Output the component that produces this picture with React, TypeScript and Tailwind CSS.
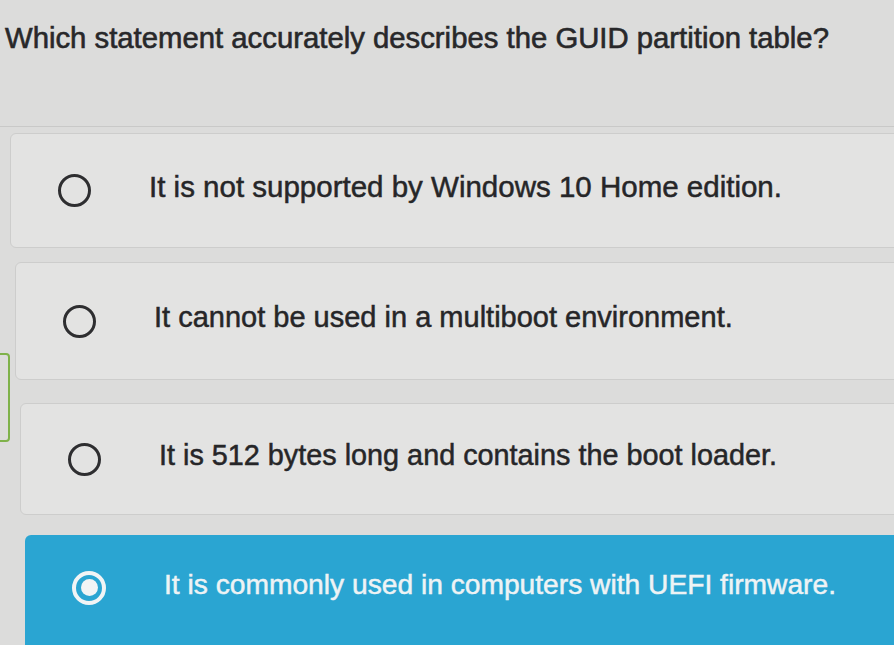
import React from 'react';

interface Choice {
    id: number;
    text: string;
    selected?: boolean;
    offset: string;
    height: string;
    size: string;
}

const choices: Choice[] = [
    { id: 1, text: 'It is not supported by Windows 10 Home edition.', offset: 'ml-[10px]', height: 'h-[115px]', size: 'text-[29.5px]' },
    { id: 2, text: 'It cannot be used in a multiboot environment.', offset: 'ml-[15px]', height: 'h-[118px]', size: 'text-[29px]' },
    { id: 3, text: 'It is 512 bytes long and contains the boot loader.', offset: 'ml-[20px]', height: 'h-[112px]', size: 'text-[28.8px]' },
    { id: 4, text: 'It is commonly used in computers with UEFI firmware.', selected: true, offset: 'ml-[25px]', height: 'h-[115px]', size: 'text-[28.2px]' },
];

const Radio: React.FC<{ selected?: boolean }> = ({ selected }) => {
    if (selected) {
        return (
            <div className="shrink-0 w-[34px] h-[34px] rounded-full border-[4px] border-[#f1f4f5] flex items-center justify-center">
                <div className="w-[17px] h-[17px] rounded-full bg-[#f1f4f5]" />
            </div>
        );
    }
    return <div className="shrink-0 w-[33px] h-[33px] rounded-full border-[3px] border-[#2e2e30]" />;
};

const ChoiceCard: React.FC<{ item: Choice }> = ({ item }) => (
    <div
        className={`${item.offset} ${item.height} mr-[-20px] rounded-[6px] flex items-center pl-[47px] ${
            item.selected ? 'bg-[#2aa5d2] text-[#eef3f5]' : 'bg-[#e3e3e2] border border-[#cdcdcc] text-[#262628]'
        }`}
    >
        <div className={`flex items-center ${item.selected ? '-mt-[10px]' : ''}`}>
            <Radio selected={item.selected} />
            <div className={`ml-[58px] ${item.size} leading-none -mt-[7px] whitespace-nowrap [-webkit-text-stroke:0.5px_currentColor]`}>
                {item.text}
            </div>
        </div>
    </div>
);

export default function App() {
    return (
        <div
            className="relative w-[894px] h-[645px] overflow-hidden bg-[#dcdcdb]"
            style={{ fontFamily: '"Liberation Sans", Arial, sans-serif' }}
        >
            <div className="pl-[5px] pt-[23px] h-[127px] border-b border-[#c9c9c8] text-[29.3px] leading-none whitespace-nowrap text-[#28282a] [-webkit-text-stroke:0.6px_#28282a]">
                Which statement accurately describes the GUID partition table?
            </div>
            <div className="flex flex-col pt-[6px]">
                <ChoiceCard item={choices[0]} />
                <div className="h-[14px]" />
                <ChoiceCard item={choices[1]} />
                <div className="h-[23px]" />
                <ChoiceCard item={choices[2]} />
                <div className="h-[20px]" />
                <ChoiceCard item={choices[3]} />
            </div>
            <div className="absolute left-[-12px] top-[353px] w-[22px] h-[89px] rounded-[4px] border-[2px] border-[#7fb24a]" />
        </div>
    );
}
